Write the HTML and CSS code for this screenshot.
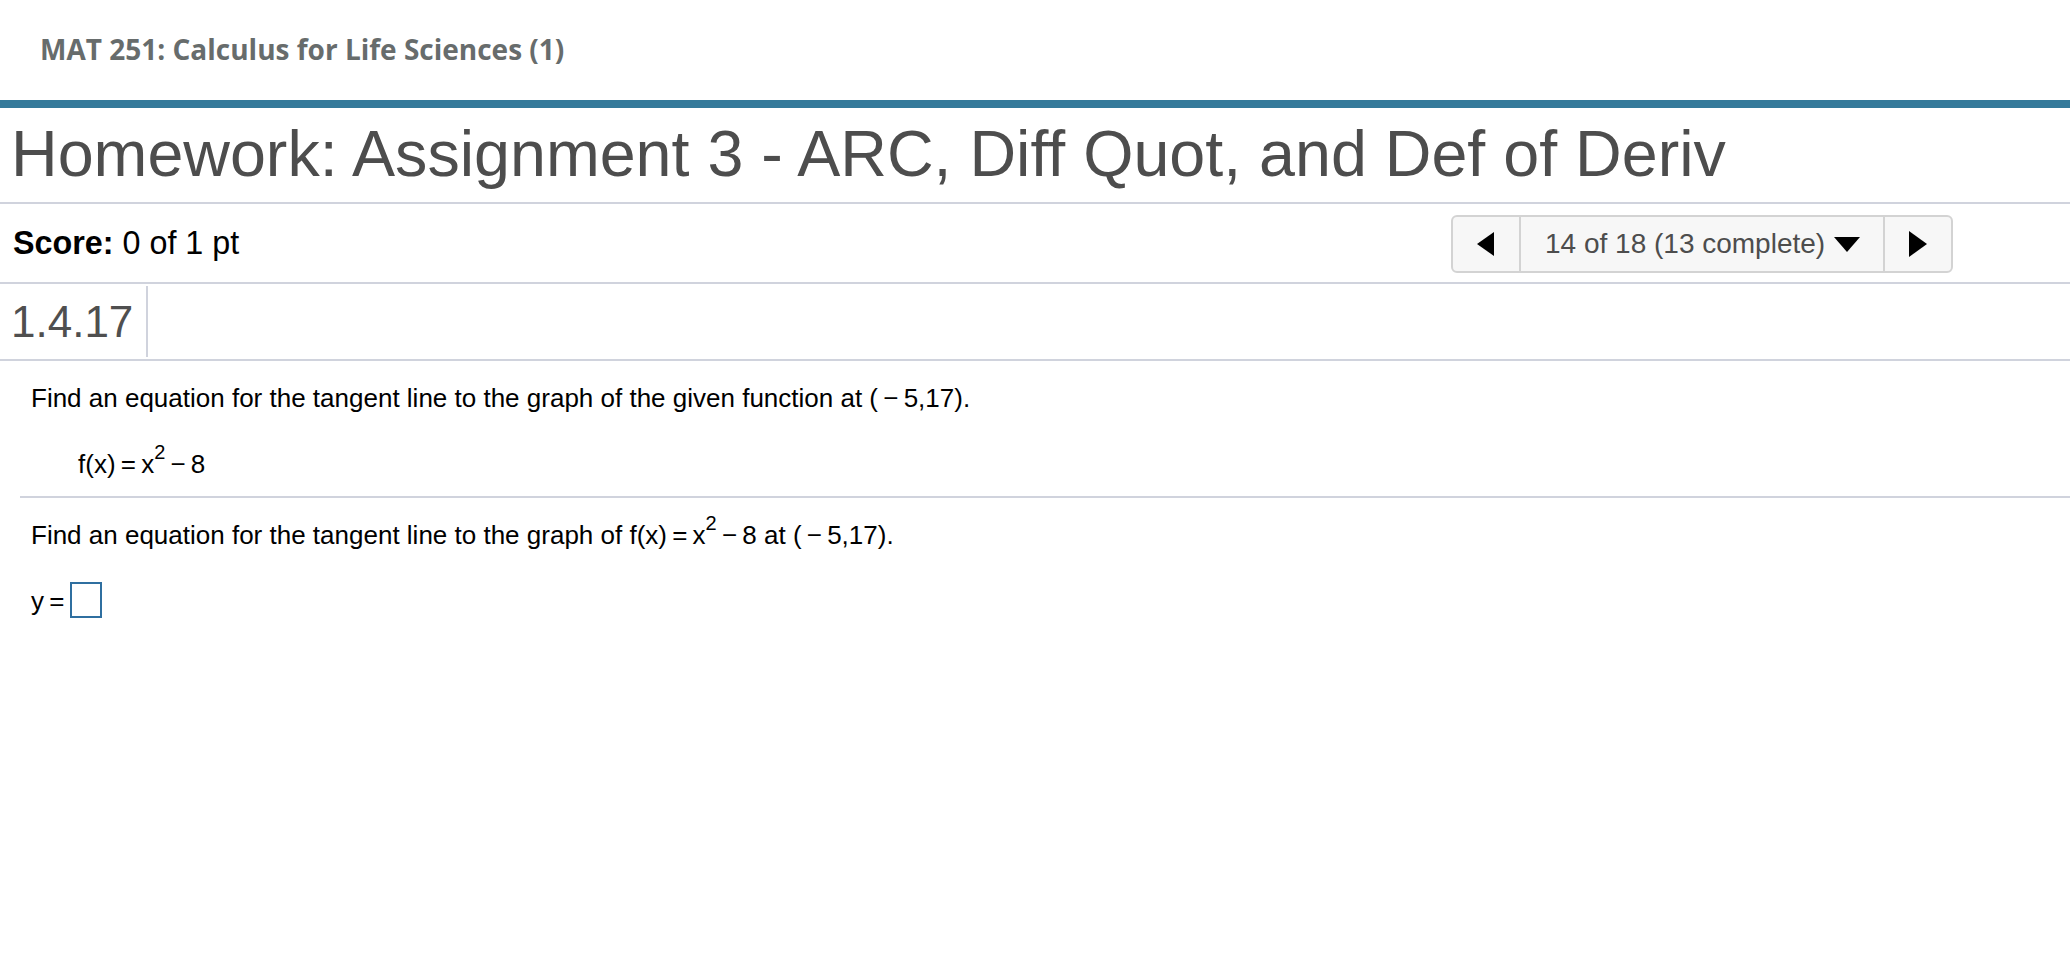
FILE: index.html
```
<!DOCTYPE html>
<html>
<head>
<meta charset="utf-8">
<title>Homework</title>
<link rel="stylesheet" href="styles.css">
</head>
<body>
<header class="course">
  <div class="course-title">MAT 251: Calculus for Life Sciences (1)</div>
</header>
<div class="accent-bar"></div>
<h1 class="hw-title">Homework: Assignment 3 - ARC, Diff Quot, and Def of Deriv</h1>
<div class="score-row">
  <div class="score"><b>Score:</b> 0 of 1 pt</div>
  <div class="nav">
    <div class="nav-btn">
      <svg width="18" height="24" viewBox="0 0 18 24"><polygon points="17,0 17,24 0,12" fill="#000"/></svg>
    </div>
    <div class="nav-mid">
      <span>14 of 18 (13 complete)</span>
      <svg width="26" height="15" viewBox="0 0 26 15"><polygon points="0,0 26,0 13,15" fill="#000"/></svg>
    </div>
    <div class="nav-btn">
      <svg width="18" height="26" viewBox="0 0 18 26"><polygon points="0,0 0,26 18,13" fill="#000"/></svg>
    </div>
  </div>
</div>
<div class="qnum-row">
  <div class="qnum">1.4.17</div>
</div>
<main class="question">
  <div class="stem">
    <p class="line first">Find an equation for the tangent line to the graph of the given function at (&thinsp;−&thinsp;5,17).</p>
    <p class="line func">f(x)&thinsp;=&thinsp;x<sup>2</sup>&thinsp;−&thinsp;8</p>
  </div>
  <div class="part">
    <p class="line">Find an equation for the tangent line to the graph of f(x)&thinsp;=&thinsp;x<sup>2</sup>&thinsp;−&thinsp;8 at (&thinsp;−&thinsp;5,17).</p>
    <p class="line answer">y&thinsp;=&thinsp;<span class="answer-box"></span></p>
  </div>
</main>
</body>
</html>
```
FILE: styles.css
```
html, body {
  margin: 0;
  padding: 0;
  background: #fff;
}
body {
  font-family: "Liberation Sans", Arial, Helvetica, sans-serif;
  color: #000;
}
.course {
  height: 100px;
  box-sizing: border-box;
  padding: 29px 0 0 40px;
}
.course-title {
  font-family: "Open Sans", "Liberation Sans", sans-serif;
  font-weight: 700;
  font-size: 28px;
  line-height: 40px;
  color: #676c6c;
}
.accent-bar {
  height: 8px;
  background: #357a9a;
}
.hw-title {
  margin: 0;
  padding: 10px 0 12px 11px;
  font-weight: 400;
  font-size: 64.6px;
  line-height: 72px;
  color: #4d4d4d;
  border-bottom: 2px solid #d0d3dd;
}
.score-row {
  height: 78px;
  display: flex;
  align-items: center;
  justify-content: space-between;
  padding: 0 117px 0 13px;
  border-bottom: 2px solid #d0d3dd;
}
.score {
  font-size: 32.3px;
  color: #000;
}
.nav {
  display: flex;
  height: 58px;
  box-sizing: border-box;
  border: 2px solid #d3d3d3;
  border-radius: 6px;
  background: #f7f7f7;
  margin-top: 1px;
}
.nav-btn {
  width: 66px;
  display: flex;
  align-items: center;
  justify-content: center;
}
.nav-mid {
  width: 366px;
  box-sizing: border-box;
  display: flex;
  align-items: center;
  gap: 9px;
  padding-left: 24px;
  border-left: 2px solid #d3d3d3;
  border-right: 2px solid #d3d3d3;
  font-size: 28px;
  color: #4d4d4d;
}
.nav-mid svg {
  margin-top: 2px;
}
.qnum-row {
  height: 75px;
  display: flex;
  align-items: stretch;
  border-bottom: 2px solid #d0d3dd;
}
.qnum {
  display: flex;
  align-items: center;
  padding: 0 13px 0 11px;
  margin: 2px 0;
  font-size: 44px;
  color: #4f4f4f;
  border-right: 2px solid #d0d3dd;
}
.question {
  margin-left: 20px;
}
.line {
  margin: 0;
  padding-left: 11px;
  font-size: 26px;
  line-height: 29px;
}
.first {
  padding-top: 23px;
}
.func {
  padding-left: 58px;
  margin-top: 37px;
}
.stem {
  padding-bottom: 17px;
  border-bottom: 2px solid #d0d3dd;
}
.part {
  padding-top: 23px;
}
sup {
  font-size: 20px;
  line-height: 0;
  vertical-align: 14px;
}
.answer {
  margin-top: 32px;
}
.answer-box {
  display: inline-block;
  width: 32px;
  height: 36px;
  box-sizing: border-box;
  border: 2px solid #2f6fa0;
  vertical-align: -8px;
}
```
